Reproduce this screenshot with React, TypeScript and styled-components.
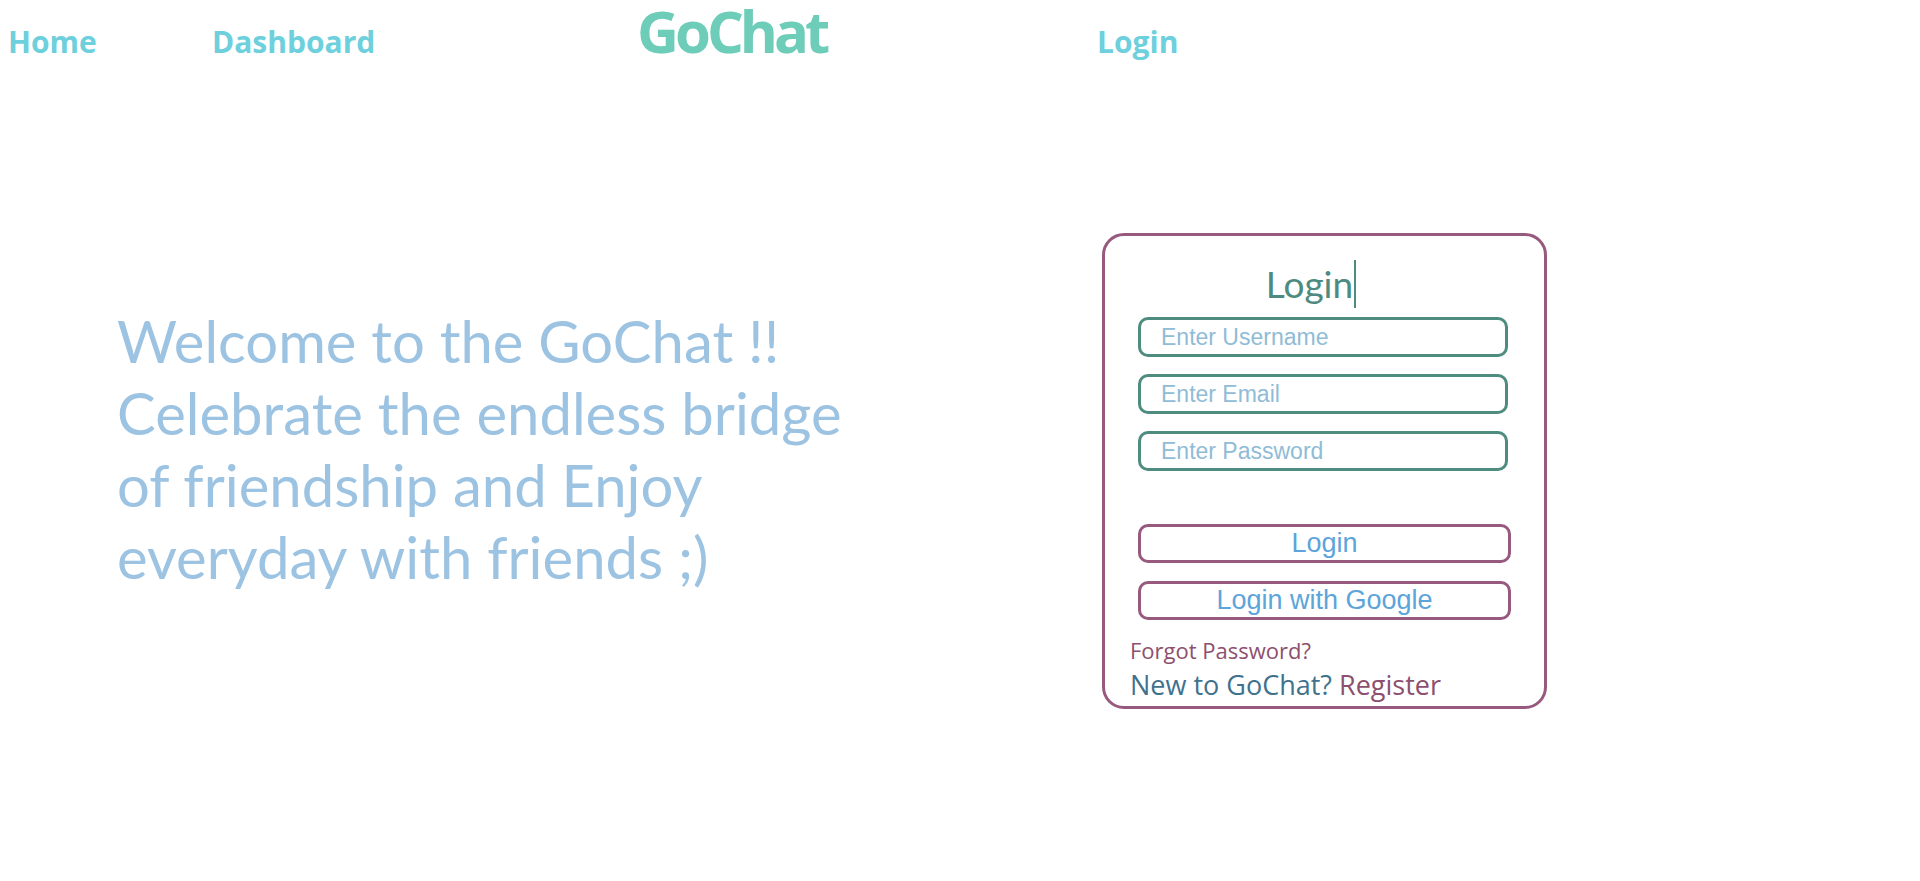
import React from "react";
import styled, { createGlobalStyle } from "styled-components";

const GlobalStyle = createGlobalStyle`
  html, body {
    margin: 0;
    padding: 0;
    background: #fff;
  }
  * {
    box-sizing: border-box;
  }
`;

const Header = styled.nav`
  display: grid;
  grid-template-columns: 204px 425px 460px 1fr;
  align-items: baseline;
  padding-left: 8px;
  height: 61px;
`;

const NavLink = styled.a`
  font-family: "Open Sans", "Noto Sans", sans-serif;
  font-weight: 700;
  font-size: 30px;
  color: #6dd0dc;
  text-decoration: none;
  cursor: pointer;
`;

const Brand = styled.h1`
  margin: 0;
  font-family: "Open Sans", "Noto Sans", sans-serif;
  font-weight: 700;
  font-size: 58px;
  line-height: 62px;
  letter-spacing: -4px;
  color: #6dcdb9;
`;

const Main = styled.main`
  display: grid;
  grid-template-columns: 985px 445px;
  align-items: center;
  padding-left: 117px;
  min-height: calc(100vh - 61px);
`;

const Welcome = styled.p`
  margin: 0;
  padding-bottom: 44px;
  max-width: 760px;
  font-family: Lato, "Open Sans", sans-serif;
  font-size: 58px;
  line-height: 72px;
  color: #9dc3e2;
`;

const Card = styled.form`
  display: flex;
  flex-direction: column;
  width: 445px;
  height: 476px;
  border: 3px solid #975a7e;
  border-radius: 22px;
  padding: 24px 0 0 0;
`;

const Title = styled.div`
  text-align: center;
  padding-right: 27px;
  margin-bottom: 9px;
`;

const TitleText = styled.span`
  display: inline-block;
  font-family: Lato, "Open Sans", sans-serif;
  font-weight: 400;
  font-size: 37px;
  line-height: 48px;
  color: #4e8a80;
  border-right: 2px solid #4e8a80;
  padding-right: 1px;
`;

const Input = styled.input`
  width: 370px;
  height: 40px;
  margin: 0 0 17px 33px;
  padding: 0 0 0 20px;
  border: 3px solid #4f8c80;
  border-radius: 10px;
  outline: none;
  font-family: "Liberation Sans", Arial, sans-serif;
  font-size: 23px;
  color: #3a6f86;
  background: #fff;

  &::placeholder {
    color: #8fbcd6;
  }
`;

const Button = styled.button<{ $first?: boolean }>`
  width: 373px;
  height: 39px;
  margin: ${(p) => (p.$first ? "36px" : "0")} 0 18px 33px;
  padding: 0;
  border: 3px solid #975a7e;
  border-radius: 10px;
  background: #fff;
  font-family: "Liberation Sans", Arial, sans-serif;
  font-size: 27px;
  line-height: 33px;
  color: #5ca4da;
  cursor: pointer;
`;

const Forgot = styled.a`
  margin: -3px 0 1px 25px;
  font-family: "Open Sans", "Noto Sans", sans-serif;
  font-size: 22px;
  color: #8d4f6e;
  cursor: pointer;
`;

const RegisterLine = styled.div`
  margin-left: 25px;
  font-family: "Open Sans", "Noto Sans", sans-serif;
  font-size: 27px;
  color: #40728e;
`;

const RegisterLink = styled.a`
  color: #8d4f6e;
  cursor: pointer;
`;

export default function App() {
  return (
    <>
      <GlobalStyle />
      <Header>
        <NavLink>Home</NavLink>
        <NavLink>Dashboard</NavLink>
        <Brand>GoChat</Brand>
        <NavLink>Login</NavLink>
      </Header>
      <Main>
        <Welcome>
          Welcome to the GoChat !! Celebrate the endless bridge of friendship and Enjoy everyday with
          friends ;)
        </Welcome>
        <Card onSubmit={(e) => e.preventDefault()}>
          <Title>
            <TitleText>Login</TitleText>
          </Title>
          <Input type="text" placeholder="Enter Username" />
          <Input type="email" placeholder="Enter Email" />
          <Input type="password" placeholder="Enter Password" />
          <Button type="submit" $first>
            Login
          </Button>
          <Button type="button">Login with Google</Button>
          <Forgot>Forgot Password?</Forgot>
          <RegisterLine>
            New to GoChat? <RegisterLink>Register</RegisterLink>
          </RegisterLine>
        </Card>
      </Main>
    </>
  );
}
